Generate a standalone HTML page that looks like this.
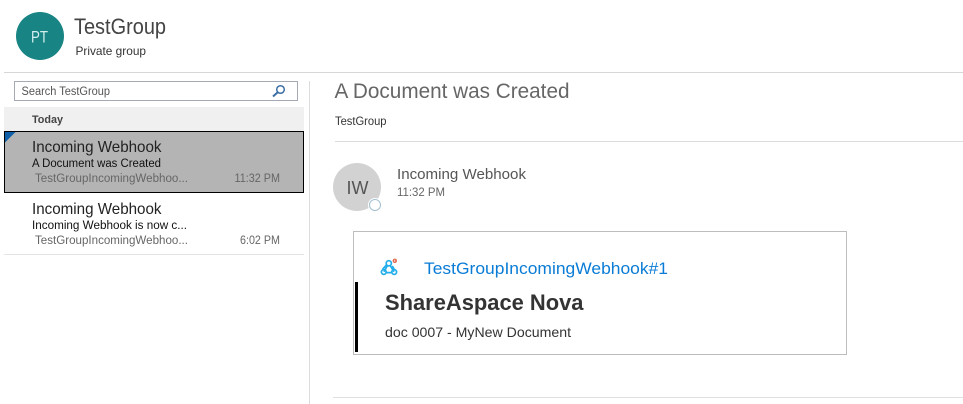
<!DOCTYPE html>
<html>
<head>
<meta charset="utf-8">
<style>
html,body{margin:0;padding:0;background:#fff;width:963px;height:404px;overflow:hidden}
svg{display:block;position:absolute;left:0;top:0}
text{font-family:"Liberation Sans",Arial,sans-serif;white-space:pre}
</style>
</head>
<body>
<svg width="963" height="404" viewBox="0 0 963 404" xmlns="http://www.w3.org/2000/svg">
<rect width="963" height="404" fill="#fff"/>
<!-- header -->
<circle cx="40" cy="36" r="24" fill="#188484"/>
<text x="31" y="42.5" font-size="17" fill="#d4eeee" textLength="17" lengthAdjust="spacingAndGlyphs">PT</text>
<text x="74" y="34" font-size="22" fill="#444" textLength="92" lengthAdjust="spacingAndGlyphs">TestGroup</text>
<text x="75.5" y="55" font-size="12" fill="#333" textLength="70.5" lengthAdjust="spacingAndGlyphs">Private group</text>
<rect x="4" y="72" width="959" height="1" fill="#d6d6d6"/>
<!-- search -->
<rect x="14.5" y="81.5" width="283" height="19" fill="#fff" stroke="#a3a9b5"/>
<text x="21.5" y="95" font-size="11.5" fill="#555" textLength="88.5" lengthAdjust="spacingAndGlyphs">Search TestGroup</text>
<circle cx="280.5" cy="89.5" r="3.8" fill="none" stroke="#3a6ea5" stroke-width="1.5"/>
<path d="M277.7 92.3L273 96.5" stroke="#3a6ea5" stroke-width="2" fill="none"/>
<rect x="309" y="81" width="1" height="323" fill="#dcdcdc"/>
<!-- list -->
<rect x="4" y="107" width="300" height="24" fill="#f0f0f0"/>
<text x="32" y="123" font-size="11" font-weight="bold" fill="#444" textLength="31" lengthAdjust="spacingAndGlyphs">Today</text>
<rect x="4.5" y="131.5" width="299" height="61" fill="#b4b4b4" stroke="#000"/>
<path d="M5 132H15.5L5 142.5Z" fill="#0f5ea8"/>
<text x="32" y="152" font-size="16" fill="#222" textLength="129.5" lengthAdjust="spacingAndGlyphs">Incoming Webhook</text>
<text x="32" y="167" font-size="11.5" fill="#111" textLength="129" lengthAdjust="spacingAndGlyphs">A Document was Created</text>
<text x="35" y="182" font-size="11.5" fill="#666" textLength="153" lengthAdjust="spacingAndGlyphs">TestGroupIncomingWebhoo...</text>
<text x="234.5" y="182" font-size="11.5" fill="#666" textLength="45.5" lengthAdjust="spacingAndGlyphs">11:32 PM</text>
<text x="32" y="214" font-size="16" fill="#222" textLength="129.5" lengthAdjust="spacingAndGlyphs">Incoming Webhook</text>
<text x="32" y="229" font-size="11.5" fill="#111" textLength="155" lengthAdjust="spacingAndGlyphs">Incoming Webhook is now c...</text>
<text x="35" y="244" font-size="11.5" fill="#666" textLength="153" lengthAdjust="spacingAndGlyphs">TestGroupIncomingWebhoo...</text>
<text x="240" y="244" font-size="11.5" fill="#666" textLength="40" lengthAdjust="spacingAndGlyphs">6:02 PM</text>
<rect x="4" y="254" width="300" height="1" fill="#e4e4e4"/>
<!-- reading pane -->
<text x="334.5" y="98" font-size="21" fill="#666" textLength="235" lengthAdjust="spacingAndGlyphs">A Document was Created</text>
<text x="335" y="125" font-size="11.5" fill="#333" textLength="51.5" lengthAdjust="spacingAndGlyphs">TestGroup</text>
<rect x="335" y="141" width="628" height="1" fill="#dcdcdc"/>
<circle cx="357" cy="187" r="24" fill="#d2d2d2"/>
<text x="346.5" y="194" font-size="18" fill="#555" textLength="22" lengthAdjust="spacingAndGlyphs">IW</text>
<circle cx="375" cy="205" r="7" fill="#fff"/>
<circle cx="375" cy="205" r="5.5" fill="#fff" stroke="#a3bfd0" stroke-width="1"/>
<text x="397" y="179" font-size="14.5" fill="#555" textLength="129" lengthAdjust="spacingAndGlyphs">Incoming Webhook</text>
<text x="397" y="196" font-size="12" fill="#666" textLength="48" lengthAdjust="spacingAndGlyphs">11:32 PM</text>
<!-- card -->
<rect x="353.5" y="231.5" width="493" height="123" fill="#fff" stroke="#bdbdbd"/>
<rect x="355" y="282" width="3" height="70" fill="#000"/>
<g fill="none" stroke="#22aeea" stroke-width="1.7">
<circle cx="388.8" cy="263.3" r="2.6"/>
<circle cx="383.8" cy="272" r="2.4"/>
<circle cx="394.2" cy="272" r="2.4"/>
<path d="M387.4 265.6L384 271.8M390.2 265.6L394 271.8M386.2 272.6H391.8M386.6 264.8L382.6 269.2M394.2 269.2L392.2 266"/>
</g>
<circle cx="394.8" cy="260.8" r="2.2" fill="#e2674a"/>
<rect x="394.4" y="259.8" width="0.8" height="2" fill="#fff"/>
<text x="424" y="274" font-size="17" fill="#0a7cd6" textLength="244" lengthAdjust="spacingAndGlyphs">TestGroupIncomingWebhook#1</text>
<text x="385" y="310" font-size="22" font-weight="bold" fill="#333" textLength="198.5" lengthAdjust="spacingAndGlyphs">ShareAspace Nova</text>
<text x="385" y="337" font-size="14" fill="#333" textLength="186" lengthAdjust="spacingAndGlyphs">doc 0007 - MyNew Document</text>
<rect x="333" y="397" width="630" height="1" fill="#e0e0e0"/>
</svg>
</body>
</html>
